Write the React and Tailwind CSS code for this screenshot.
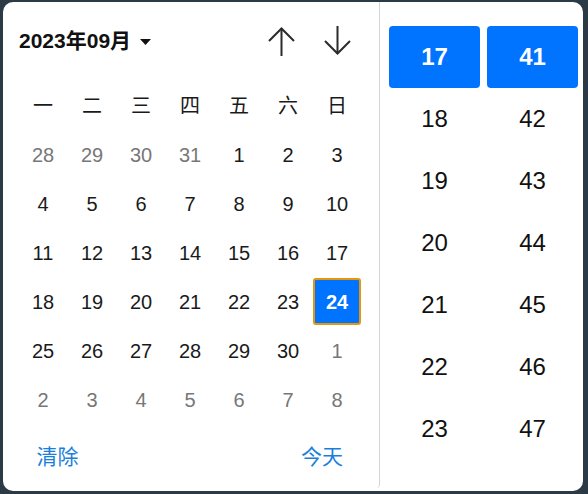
import React from "react";

const FONT = { fontFamily: '"Liberation Sans", Arial, "Noto Sans CJK SC", sans-serif' };

const weekdays = ["一", "二", "三", "四", "五", "六", "日"];
const days = [
  [28, true], [29, true], [30, true], [31, true], [1], [2], [3],
  [4], [5], [6], [7], [8], [9], [10],
  [11], [12], [13], [14], [15], [16], [17],
  [18], [19], [20], [21], [22], [23], [24, false, true],
  [25], [26], [27], [28], [29], [30], [1, true],
  [2, true], [3, true], [4, true], [5, true], [6, true], [7, true], [8, true],
];
const hours = [17, 18, 19, 20, 21, 22, 23];
const minutes = [41, 42, 43, 44, 45, 46, 47];

function ArrowUp() {
  return (
    <svg width="27" height="30" viewBox="0 0 27 30" fill="none" stroke="#2b2b2b" strokeWidth="2" strokeLinecap="butt">
      <path d="M13.5 2.5V30" />
      <path d="M1 15L13.5 2.5L26 15" />
    </svg>
  );
}

function ArrowDown() {
  return (
    <svg width="27" height="30" viewBox="0 0 27 30" fill="none" stroke="#2b2b2b" strokeWidth="2" strokeLinecap="butt">
      <path d="M13.5 0V27.5" />
      <path d="M1 15L13.5 27.5L26 15" />
    </svg>
  );
}

export default function App() {
  return (
    <div className="w-[588px] h-[494px] bg-[#2b3a44] pt-[2px] pl-[3px] pr-[5px] pb-[3px]" style={FONT}>
      <div className="w-full h-full bg-white rounded-[10px] flex overflow-hidden">
        {/* Left: calendar */}
        <div className="w-[377px] shrink-0 border-r border-[#d4d4d4] rounded-br-[4px] mb-[3px] flex flex-col pl-[15.5px] pr-[17.5px]">
          <div className="h-[50px] mt-[14px] flex items-center">
            <div className="flex items-center text-[21px] font-bold text-[#111] pl-[0.5px]">
              <span>2023年09月</span>
              <svg className="ml-[9px] mt-[1px]" width="11" height="6" viewBox="0 0 11 6">
                <path d="M0 0H11L5.5 6Z" fill="#111" />
              </svg>
            </div>
            <div className="ml-auto flex items-center gap-[7px]">
              <div className="w-[49px] h-[50px] flex items-center justify-center">
                <ArrowUp />
              </div>
              <div className="w-[49px] h-[50px] flex items-center justify-center">
                <ArrowDown />
              </div>
            </div>
          </div>
          <div className="mt-[15px] grid grid-cols-7 auto-rows-[49px]">
            {weekdays.map((w) => (
              <div key={w} className="flex items-center justify-center text-[20px] text-[#1a1a1a]">
                {w}
              </div>
            ))}
            {days.map(([d, other, sel], i) => (
              <div key={i} className="flex items-center justify-center">
                {sel ? (
                  <div className="w-[48px] h-[47px] rounded-[3px] border-2 border-[#e6960a] bg-[#0073ff] text-white font-bold text-[20px] flex items-center justify-center">
                    {d}
                  </div>
                ) : (
                  <span className={`text-[20px] ${other ? "text-[#777777]" : "text-[#1a1a1a]"}`}>{d}</span>
                )}
              </div>
            ))}
          </div>
          <div className="mt-[13px] h-[40px] flex items-center justify-between pl-[18px] pr-[18.5px] text-[21px] text-[#1a7fdc]">
            <span>清除</span>
            <span>今天</span>
          </div>
        </div>
        {/* Right: time columns */}
        <div className="flex-1 flex gap-[7px] pl-[9px] pr-[5px] pt-[24px]">
          {[hours, minutes].map((col, ci) => (
            <div key={ci} className="w-[91px] flex flex-col">
              {col.map((n, i) => (
                <div key={n} className="h-[62px] flex items-center justify-center">
                  {i === 0 ? (
                    <div className="w-full h-full rounded-[4px] bg-[#0073ff] text-white font-bold text-[24px] flex items-center justify-center">
                      {n}
                    </div>
                  ) : (
                    <span className="text-[24px] text-[#111]">{n}</span>
                  )}
                </div>
              ))}
            </div>
          ))}
        </div>
      </div>
    </div>
  );
}
